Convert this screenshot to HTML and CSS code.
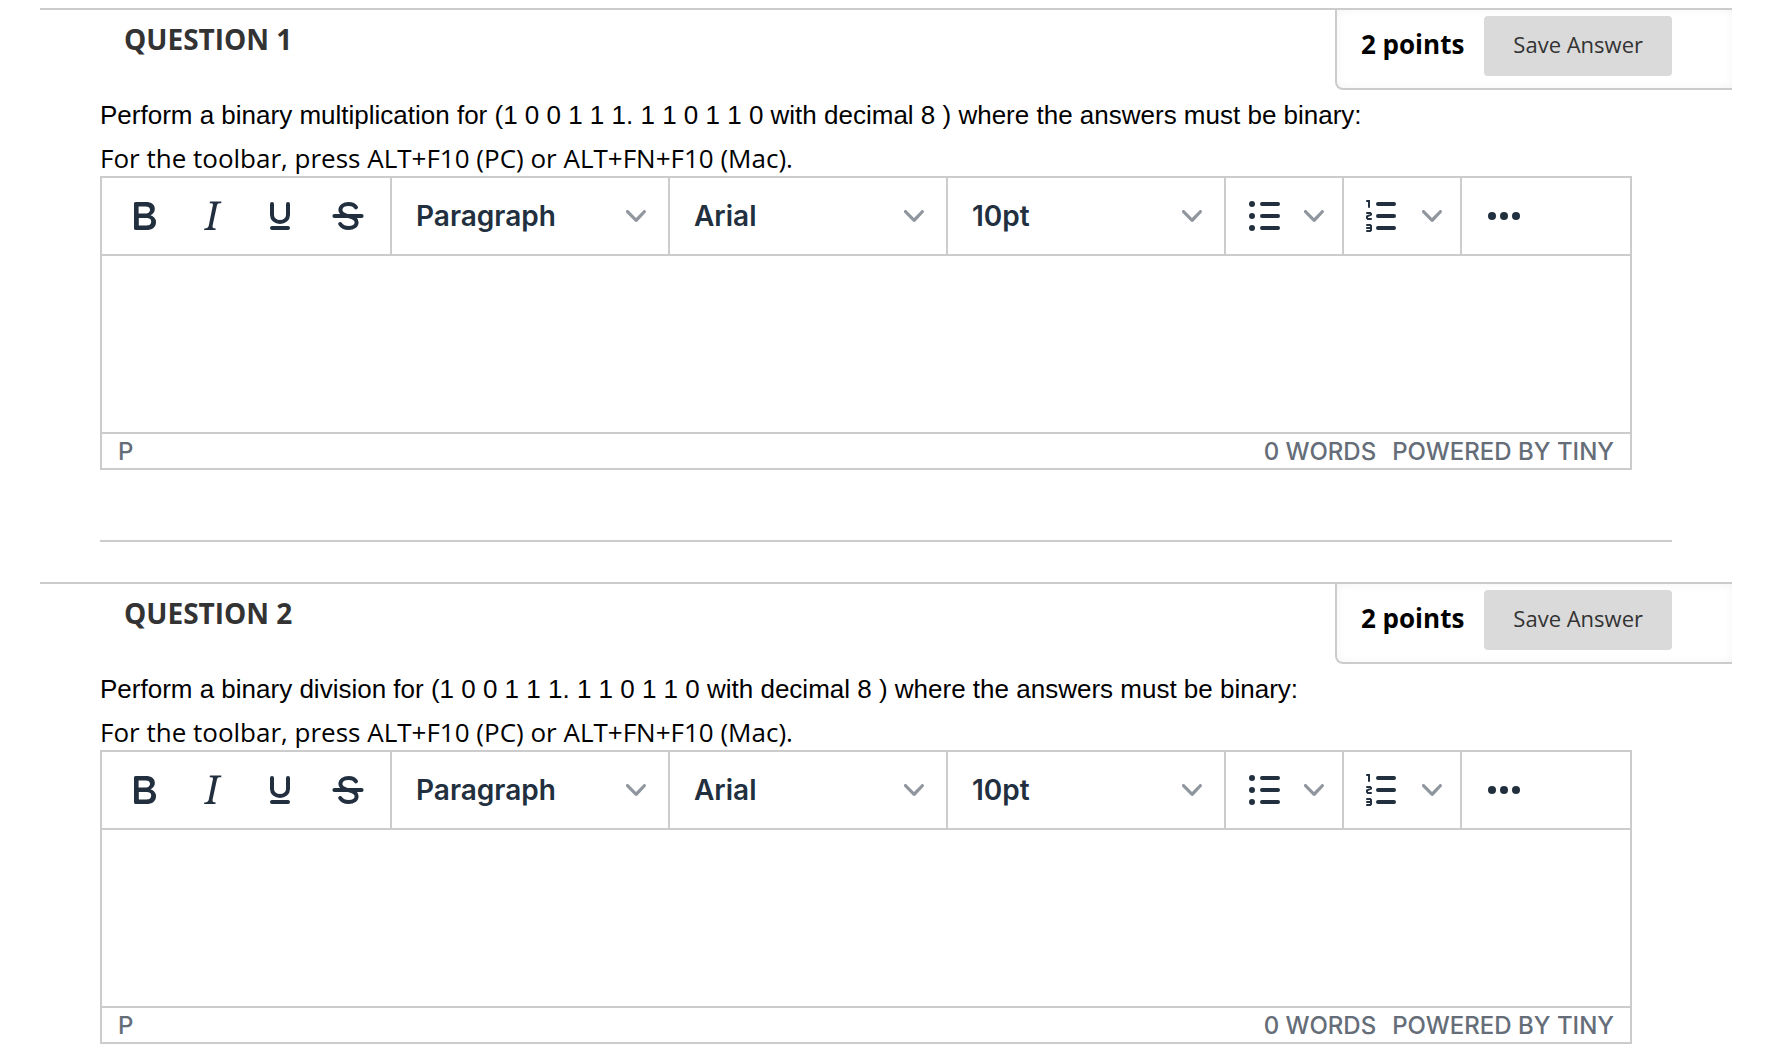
FILE: index.html
```html
<!DOCTYPE html>
<html lang="en">
<head>
    <meta charset="UTF-8">
    <meta name="viewport" content="width=device-width, initial-scale=1.0">
    <title>Test Questions</title>
    <link rel="stylesheet" href="styles.css">
</head>
<body>
    <!-- Shared toolbar icons -->
    <svg class="sprite" aria-hidden="true">
        <symbol id="bold" viewBox="0 0 24 24">
            <path d="M7.8 19c-.3 0-.5 0-.6-.2l-.2-.5V5.7c0-.2 0-.4.2-.5l.6-.2h5c1.5 0 2.7.3 3.5 1 .7.6 1.1 1.4 1.1 2.5a3 3 0 0 1-.6 1.9c-.4.6-1 1-1.6 1.2.4.1.9.3 1.3.6s.8.7 1 1.2c.4.4.5 1 .5 1.6 0 1.3-.4 2.3-1.3 3-.8.7-2.1 1-3.8 1H7.8Zm5-8.3c.6 0 1.2-.1 1.6-.5.4-.3.6-.7.6-1.3 0-1.1-.8-1.7-2.3-1.7H9.3v3.5h3.4Zm.5 6c.7 0 1.3-.1 1.7-.4.4-.4.6-.9.6-1.5s-.2-1-.7-1.4c-.4-.3-1-.4-2-.4H9.4v3.8h4Z"/>
        </symbol>
        <symbol id="italic" viewBox="0 0 24 24">
            <path d="m16.7 4.7-.1.9h-.3c-.6 0-1 0-1.4.3-.3.3-.4.6-.5 1.1l-2.1 9.8v.6c0 .5.4.8 1.4.8h.2l-.2.8H8l.2-.8h.2c1.1 0 1.8-.5 2-1.5l2-9.8.1-.5c0-.6-.4-.8-1.4-.8h-.3l.2-.9h5.8Z"/>
        </symbol>
        <symbol id="underline" viewBox="0 0 24 24">
            <path class="line" d="M8 6v5.5C8 13.5 9.800 15 12 15s4-1.5 4-3.5V6M8 18h8"/>
        </symbol>
        <symbol id="strike" viewBox="0 0 24 24">
            <path class="line" d="M16 7.7C15.3 6.6 13.9 6 12.3 6 10 6 8.2 7.2 8.2 9c0 1.6 1.3 2.3 3.3 2.9M12.5 12.1c2.4.5 3.8 1.3 3.8 3 0 1.8-1.6 2.9-4 2.9-1.9 0-3.4-.7-4.2-2M5.2 12h13.6"/>
        </symbol>
        <symbol id="bullets" viewBox="0 0 24 24">
            <path class="line" d="M11 6h8M11 12h8M11 18h8"/>
            <circle cx="6" cy="6" r="1.5"/>
            <circle cx="6" cy="12" r="1.5"/>
            <circle cx="6" cy="18" r="1.5"/>
        </symbol>
        <symbol id="numbers" viewBox="0 0 24 24">
            <path class="line" d="M10 6h8M10 12h8M10 18h8"/>
            <path class="thin" d="M4.5 4.5h1v3M4.5 10.5h1.600l.4.4v.4l-2 .9v.8l.4.500h1.6M4.5 16.5h1.600l.4.4v2.200l-.4.4H4.500M4.500 18h2"/>
        </symbol>
        <symbol id="more" viewBox="0 0 24 24">
            <circle cx="6" cy="12" r="2"/>
            <circle cx="12" cy="12" r="2"/>
            <circle cx="18" cy="12" r="2"/>
        </symbol>
        <symbol id="chevron" viewBox="0 0 10 10">
            <path d="M8.7 2.2c.3-.3.8-.3 1 0 .4.4.4.9 0 1.2L5.7 7.8c-.3.3-.9.3-1.2 0L.2 3.4a.8.8 0 0 1 0-1.2c.3-.3.8-.3 1.1 0L5 6l3.7-3.8Z"/>
        </symbol>
    </svg>

    <section class="question">
        <header class="question-header">
            <h3>QUESTION 1</h3>
            <div class="points">
                <strong>2 points</strong>
                <button type="button" class="save">Save Answer</button>
            </div>
        </header>
        <div class="question-body">
            <p class="prompt">Perform a binary multiplication for (1 0 0 1 1 1. 1 1 0 1 1 0 with decimal 8 ) where the answers must be binary:</p>
            <label class="help" for="answer1">For the toolbar, press ALT+F10 (PC) or ALT+FN+F10 (Mac).</label>
            <div class="editor">
                <div class="toolbar">
                    <div class="group">
                        <button type="button" aria-label="Bold"><svg class="icon"><use href="#bold"/></svg></button>
                        <button type="button" aria-label="Italic"><svg class="icon"><use href="#italic"/></svg></button>
                        <button type="button" aria-label="Underline"><svg class="icon"><use href="#underline"/></svg></button>
                        <button type="button" aria-label="Strikethrough"><svg class="icon"><use href="#strike"/></svg></button>
                    </div>
                    <div class="group picker">
                        <select aria-label="Block format"><option>Paragraph</option></select>
                        <svg class="chevron"><use href="#chevron"/></svg>
                    </div>
                    <div class="group picker">
                        <select aria-label="Font"><option>Arial</option></select>
                        <svg class="chevron"><use href="#chevron"/></svg>
                    </div>
                    <div class="group picker">
                        <select aria-label="Font size"><option>10pt</option></select>
                        <svg class="chevron"><use href="#chevron"/></svg>
                    </div>
                    <div class="group split">
                        <button type="button" aria-label="Bullet list"><svg class="icon"><use href="#bullets"/></svg></button>
                        <button type="button" class="arrow" aria-label="Bullet list menu"><svg class="chevron"><use href="#chevron"/></svg></button>
                    </div>
                    <div class="group split">
                        <button type="button" aria-label="Numbered list"><svg class="icon"><use href="#numbers"/></svg></button>
                        <button type="button" class="arrow" aria-label="Numbered list menu"><svg class="chevron"><use href="#chevron"/></svg></button>
                    </div>
                    <div class="group">
                        <button type="button" aria-label="More"><svg class="icon"><use href="#more"/></svg></button>
                    </div>
                </div>
                <textarea id="answer1"></textarea>
                <div class="statusbar">
                    <span class="path">P</span>
                    <span>0 WORDS</span>
                    <a href="#">POWERED BY TINY</a>
                </div>
            </div>
            <hr>
        </div>
    </section>

    <section class="question">
        <header class="question-header">
            <h3>QUESTION 2</h3>
            <div class="points">
                <strong>2 points</strong>
                <button type="button" class="save">Save Answer</button>
            </div>
        </header>
        <div class="question-body">
            <p class="prompt">Perform a binary division for (1 0 0 1 1 1. 1 1 0 1 1 0 with decimal 8 ) where the answers must be binary:</p>
            <label class="help" for="answer2">For the toolbar, press ALT+F10 (PC) or ALT+FN+F10 (Mac).</label>
            <div class="editor">
                <div class="toolbar">
                    <div class="group">
                        <button type="button" aria-label="Bold"><svg class="icon"><use href="#bold"/></svg></button>
                        <button type="button" aria-label="Italic"><svg class="icon"><use href="#italic"/></svg></button>
                        <button type="button" aria-label="Underline"><svg class="icon"><use href="#underline"/></svg></button>
                        <button type="button" aria-label="Strikethrough"><svg class="icon"><use href="#strike"/></svg></button>
                    </div>
                    <div class="group picker">
                        <select aria-label="Block format"><option>Paragraph</option></select>
                        <svg class="chevron"><use href="#chevron"/></svg>
                    </div>
                    <div class="group picker">
                        <select aria-label="Font"><option>Arial</option></select>
                        <svg class="chevron"><use href="#chevron"/></svg>
                    </div>
                    <div class="group picker">
                        <select aria-label="Font size"><option>10pt</option></select>
                        <svg class="chevron"><use href="#chevron"/></svg>
                    </div>
                    <div class="group split">
                        <button type="button" aria-label="Bullet list"><svg class="icon"><use href="#bullets"/></svg></button>
                        <button type="button" class="arrow" aria-label="Bullet list menu"><svg class="chevron"><use href="#chevron"/></svg></button>
                    </div>
                    <div class="group split">
                        <button type="button" aria-label="Numbered list"><svg class="icon"><use href="#numbers"/></svg></button>
                        <button type="button" class="arrow" aria-label="Numbered list menu"><svg class="chevron"><use href="#chevron"/></svg></button>
                    </div>
                    <div class="group">
                        <button type="button" aria-label="More"><svg class="icon"><use href="#more"/></svg></button>
                    </div>
                </div>
                <textarea id="answer2"></textarea>
                <div class="statusbar">
                    <span class="path">P</span>
                    <span>0 WORDS</span>
                    <a href="#">POWERED BY TINY</a>
                </div>
            </div>
        </div>
    </section>
</body>
</html>
```
FILE: styles.css
```css
* {
    box-sizing: border-box;
}
body {
    margin: 8px 39px 0 40px;
    background-color: #fff;
    color: #000;
    font-family: "Open Sans", sans-serif;
    font-size: 26px;
}
button, select, textarea {
    margin: 0;
    padding: 0;
    border: 0;
    background: none;
    color: inherit;
    font: inherit;
}
.sprite {
    display: none;
}
.question-header {
    display: flex;
    justify-content: space-between;
    align-items: flex-start;
    border-top: 2px solid #ccc;
}
.question-header h3 {
    margin: 10px 0 0 84px;
    color: #333;
    font-size: 28px;
    line-height: 38px;
}
.points {
    display: flex;
    align-items: flex-start;
    gap: 20px;
    padding: 6px 60px 12px 24px;
    border: 2px solid #ccc;
    border-width: 0 0 2px 2px;
    border-bottom-left-radius: 8px;
    box-shadow: inset 0 0 10px rgba(0, 0, 0, 0.05);
}
.points strong {
    line-height: 56px;
}
.save {
    height: 60px;
    padding: 0 29px 4px;
    border-radius: 4px;
    background-color: #dadada;
    color: #333;
    font-size: 22px;
}
.question-body {
    padding: 10px 60px 0;
}
.prompt {
    margin: 0 0 10px;
    font-family: "Liberation Sans", Arial, sans-serif;
    line-height: 30px;
}
.help {
    display: block;
    line-height: 36px;
}
.editor {
    margin-right: 40px;
    border: 2px solid #ccc;
}
.toolbar {
    display: flex;
    border-bottom: 2px solid #ccc;
    color: #222f3e;
    font-family: Inter, sans-serif;
    font-size: 28px;
    font-weight: 600;
}
.group {
    display: flex;
    align-items: center;
    height: 76px;
    padding: 0 8px;
    border-right: 2px solid #ccc;
}
.group:last-child {
    border-right: 0;
}
.group button {
    display: flex;
    justify-content: center;
    align-items: center;
    width: 68px;
    height: 68px;
}
.split button {
    width: 60px;
}
.split .arrow {
    width: 40px;
}
.icon {
    width: 48px;
    height: 48px;
    fill: currentColor;
}
.line, .thin {
    fill: none;
    stroke: currentColor;
    stroke-width: 2;
    stroke-linecap: round;
}
.thin {
    stroke-width: 1;
}
.chevron {
    flex: none;
    width: 20px;
    height: 20px;
    fill: #222f3e;
    opacity: 0.5;
}
/* The arrow shares the grid cell with the select */
.picker {
    display: grid;
    width: 278px;
}
.picker select {
    grid-area: 1 / 1;
    width: 100%;
    height: 68px;
    padding: 0 40px 0 16px;
    appearance: none;
}
.picker .chevron {
    grid-area: 1 / 1;
    justify-self: end;
    margin-right: 14px;
    pointer-events: none;
}
textarea {
    display: block;
    width: 100%;
    height: 176px;
    padding: 16px;
    outline: 0;
    resize: none;
}
.statusbar {
    display: flex;
    gap: 16px;
    padding: 2px 16px 0;
    border-top: 2px solid #ccc;
    color: #656d78;
    font-family: Inter, sans-serif;
    font-size: 24px;
    font-weight: 500;
    line-height: 32px;
}
.statusbar a {
    color: inherit;
    text-decoration: none;
}
.path {
    flex: 1;
}
hr {
    margin: 70px 0 40px;
    border: 0;
    border-top: 2px solid #ccc;
}
```
